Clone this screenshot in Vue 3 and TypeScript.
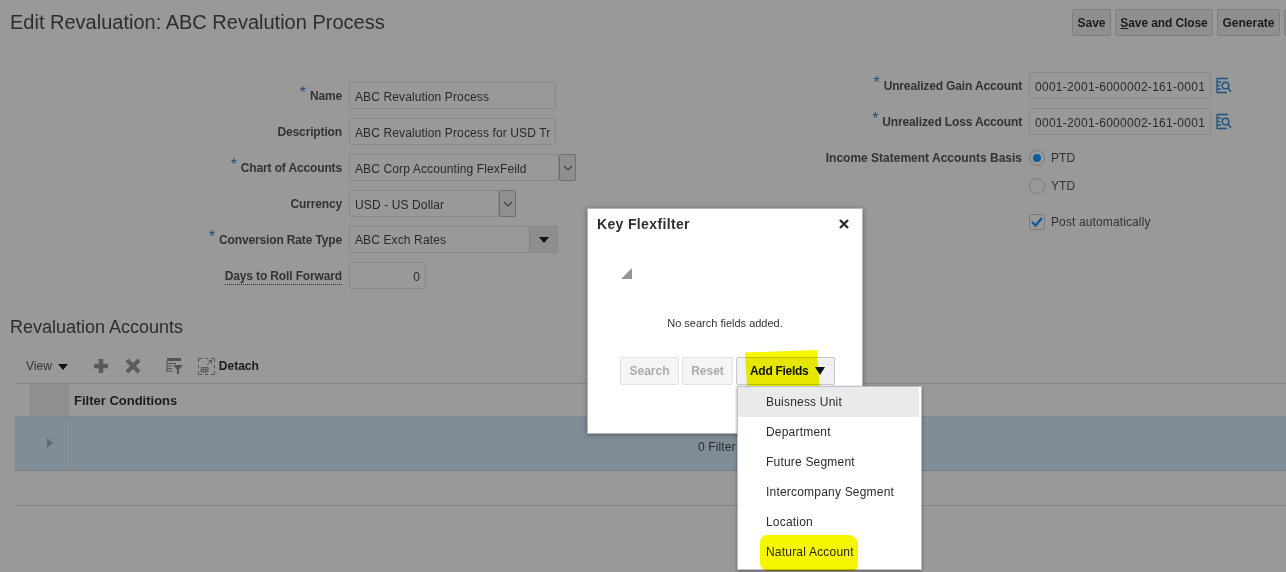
<script setup lang="ts">
interface Row { label: string; req?: boolean; hint?: boolean; value: string; kind: string }
const leftRows: Row[] = [
  { label: 'Name', req: true, value: 'ABC Revalution Process', kind: 'text' },
  { label: 'Description', value: 'ABC Revalution Process for USD Tr', kind: 'text' },
  { label: 'Chart of Accounts', req: true, value: 'ABC Corp Accounting FlexFeild', kind: 'chart' },
  { label: 'Currency', value: 'USD - US Dollar', kind: 'currency' },
  { label: 'Conversion Rate Type', req: true, value: 'ABC Exch Rates', kind: 'rate' },
  { label: 'Days to Roll Forward', hint: true, value: '0', kind: 'num' }
]
const accounts = ['Unrealized Gain Account', 'Unrealized Loss Account']
const items = ['Buisness Unit', 'Department', 'Future Segment', 'Intercompany Segment', 'Location', 'Natural Account']
</script>

<template>
  <div class="page">
    <header class="top">
      <h1>Edit Revaluation: ABC Revalution Process</h1>
      <div class="actions">
        <button class="btn save">Save</button>
        <button class="btn sc"><u>S</u>ave and Close</button>
        <button class="btn gen">Generate</button>
        <button class="btn more"></button>
      </div>
    </header>

    <section class="form">
      <div class="col-left">
        <div v-for="r in leftRows" :key="r.label" class="row">
          <label class="lab">
            <span v-if="r.req" class="star">*</span>
            <span :class="{ hint: r.hint }">{{ r.label }}</span>
          </label>
          <div v-if="r.kind === 'text'" class="field w207">{{ r.value }}</div>
          <div v-else-if="r.kind === 'num'" class="field num">{{ r.value }}</div>
          <div v-else-if="r.kind === 'rate'" class="field rate">
            <span class="grow">{{ r.value }}</span>
            <span class="ratebtn"><i class="tri"></i></span>
          </div>
          <div v-else class="sel" :class="r.kind">
            <div class="field grow">{{ r.value }}</div>
            <span class="chev">
              <svg width="10" height="6" viewBox="0 0 10 6"><path d="M1 1l4 4 4-4" fill="none" stroke="#3d3d3d" stroke-width="1.1" /></svg>
            </span>
          </div>
        </div>
      </div>

      <div class="col-right">
        <div v-for="a in accounts" :key="a" class="row">
          <label class="lab rl"><span class="star">*</span>{{ a }}</label>
          <div class="field acct">0001-2001-6000002-161-0001</div>
          <svg class="lookup" width="16" height="17" viewBox="0 0 16 17" fill="none" stroke="#1f5580" stroke-width="1.3">
            <path d="M1 1.500h11M1 5h4M1 8.500h3M1 12h4M1 15.500h10M1 1v15" />
            <circle cx="9.500" cy="8.500" r="3.300" stroke-width="1.500" />
            <path d="M12 11.200l3 3.600" stroke-width="1.700" />
          </svg>
        </div>
        <div class="row r-radio">
          <label class="lab rl inc">Income Statement Accounts Basis</label>
          <span class="radio on"><i></i></span>
          <span class="opt">PTD</span>
        </div>
        <div class="row r-radio2">
          <span class="lab rl"></span>
          <span class="radio"></span>
          <span class="opt">YTD</span>
        </div>
        <div class="row r-check">
          <span class="lab rl"></span>
          <span class="check">
            <svg width="14" height="12" viewBox="0 0 14 12"><path d="M2 6l3.500 3.500L12 2" fill="none" stroke="#0f5a99" stroke-width="2.400" /></svg>
          </span>
          <span class="opt">Post automatically</span>
        </div>
      </div>
    </section>

    <h2>Revaluation Accounts</h2>

    <div class="toolbar">
      <span class="view">View</span><i class="tri view-tri"></i>
      <svg class="t-plus" width="16" height="16" viewBox="0 0 16 16"><path d="M8 1v14M1 8h14" stroke="#5b5b5b" stroke-width="4.400" /></svg>
      <svg class="t-x" width="16" height="16" viewBox="0 0 16 16"><path d="M2 2l12 12M14 2L2 14" stroke="#5b5b5b" stroke-width="4" /></svg>
      <svg class="t-filter" width="18" height="17" viewBox="0 0 18 17" fill="none">
        <path d="M1 0h14v3H1z" fill="#555" />
        <path d="M1 5.500h9M1 8h5M1 10.500h5M1 13h6M1 3v11" stroke="#555" stroke-width="1.100" />
        <path d="M7 7h10l-4 4.500V16h-2v-4.500z" fill="#555" />
      </svg>
      <svg class="t-detach" width="17" height="17" viewBox="0 0 17 17" fill="none" stroke="#555">
        <path d="M.5 4V.5H4M7 .5h3M13 .5h3.500V4M16.500 7v3M16.500 13v3.500H13M10 16.500H7M4 16.500H.5V13M.5 10V7" />
        <path d="M3 9.500h7v4.500H3zM3 11.800h7M5.300 9.500v4.500M7.700 9.500v4.500" stroke-width=".9" />
        <path d="M9 7l4.500-4.500M10.500 2.500h3v3" stroke-width="1" />
      </svg>
      <span class="detach">Detach</span>
    </div>

    <div class="table">
      <div class="thead">
        <span class="c1"></span><span class="c2"></span>
        <span class="th">Filter Conditions</span>
      </div>
      <div class="tbody">
        <span class="c1"></span>
        <span class="c2"><i class="expand"></i></span>
        <span class="td">0 Filter</span>
      </div>
      <div class="tfoot"></div>
    </div>

    <div class="modal">
      <div class="m-head">
        <span class="m-title">Key Flexfilter</span>
        <svg width="12" height="12" viewBox="0 0 12 12"><path d="M2 2l8 8M10 2l-8 8" stroke="#2b2b2b" stroke-width="2.300" /></svg>
      </div>
      <div class="m-tri"></div>
      <p class="m-empty">No search fields added.</p>
      <div class="m-btns">
        <button class="mbtn off s">Search</button>
        <button class="mbtn off r">Reset</button>
        <button class="mbtn add">Add Fields<i class="tri add-tri"></i></button>
      </div>
      <span class="blob b1"></span>
      <ul class="menu">
        <li v-for="(it, i) in items" :key="it" :class="{ first: i === 0 }">{{ it }}</li>
        <span class="blob b2"></span>
      </ul>
    </div>
  </div>
</template>

<style>
html, body { margin: 0; background: #999; overflow: hidden; }
</style>

<style scoped>
.page {
  position: relative;
  width: 1286px;
  height: 572px;
  overflow: hidden;
  background: #999;
  font-family: "Liberation Sans", Arial, sans-serif;
  font-size: 12px;
  letter-spacing: .12px;
  color: #2e2e2e;
}
.top {
  display: flex;
  justify-content: space-between;
  height: 72px;
  padding: 9px 0 0 10px;
  box-sizing: border-box;
}
h1 {
  margin: 2px 0 0;
  font-size: 20px;
  line-height: 22px;
  font-weight: 400;
  letter-spacing: 0;
  color: #2d2d2d;
}
.actions { display: flex; gap: 4px; width: 214px; flex: none; height: 27px; }
.btn {
  height: 27px;
  padding: 0;
  flex: none;
  border: 1px solid #7e7e7e;
  border-radius: 2px;
  background: #8f8f8f;
  font: 700 12px "Liberation Sans", Arial, sans-serif;
  color: #1c1c1c;
}
.save { width: 39px; }
.sc { width: 98px; letter-spacing: -.1px; }
.gen { width: 63px; }
.more { width: 10px; }

.form { display: grid; grid-template-columns: 580px 1fr; height: 244px; }
.col-left { padding-top: 10px; }
.row { display: flex; align-items: center; height: 27px; margin-bottom: 9px; }
.lab {
  flex: none;
  width: 342px;
  margin-right: 7px;
  text-align: right;
  font-weight: 700;
  letter-spacing: -.14px;
  color: #333;
}
.rl { width: 442px; }
.inc { letter-spacing: 0; }
.star {
  color: #1f4c73;
  font-size: 16px;
  font-weight: 400;
  line-height: 10px;
  margin-right: 4px;
  position: relative;
  top: -2px;
}
.hint { border-bottom: 1px dotted #2e2e2e; padding-bottom: 1px; }
.field {
  box-sizing: border-box;
  height: 27px;
  line-height: 27px;
  padding: 1px 5px 0;
  border: 1px solid #888;
  border-radius: 2px;
  background: #999;
  white-space: nowrap;
  overflow: hidden;
  color: #2a2a2a;
}
.w207 { width: 207px; }
.num { width: 77px; text-align: right; padding-right: 5px; }
.rate { width: 209px; display: flex; padding-right: 0; padding-top: 0; }
.rate .grow { line-height: 27px; }
.grow { flex: 1; min-width: 0; }
.ratebtn {
  width: 27px;
  display: flex;
  align-items: center;
  justify-content: center;
  background: #8e8e8e;
  border-left: 1px solid #808080;
}
.sel { display: flex; align-items: center; }
.chart { width: 227px; }
.currency { width: 167px; }
.chev {
  flex: none;
  box-sizing: border-box;
  width: 17px;
  height: 27px;
  display: flex;
  align-items: center;
  justify-content: center;
  background: #8f8f8f;
  border: 1px solid #6f6f6f;
  border-radius: 2px;
}
.tri {
  display: inline-block;
  width: 0;
  height: 0;
  border-left: 5px solid transparent;
  border-right: 5px solid transparent;
  border-top: 6px solid #111;
}
.acct { width: 182px; letter-spacing: .28px; }
.lookup { margin-left: 5px; }
.r-radio { height: 27px; margin-bottom: 1px; }
.r-radio2 { margin-bottom: 9px; }
.radio {
  flex: none;
  box-sizing: border-box;
  width: 16px;
  height: 16px;
  border: 1px solid #7c7c7c;
  border-radius: 50%;
  display: flex;
  align-items: center;
  justify-content: center;
  background: #999;
}
.radio i { width: 8px; height: 8px; border-radius: 50%; background: #0f5a99; }
.opt { margin-left: 6px; color: #333; }
.check {
  flex: none;
  box-sizing: border-box;
  width: 16px;
  height: 16px;
  border: 1px solid #7c7c7c;
  border-radius: 2px;
  display: flex;
  align-items: center;
  justify-content: center;
}

h2 {
  margin: 0 0 0 10px;
  font-size: 18px;
  line-height: 22px;
  font-weight: 400;
  letter-spacing: 0;
  color: #2d2d2d;
}
.toolbar {
  display: flex;
  align-items: center;
  height: 24px;
  margin: 16px 0 5px 26px;
}
.view { color: #333; letter-spacing: 0; }
.view-tri { margin-left: 6px; margin-top: 1px; }
.t-plus { margin-left: 25px; }
.t-x { margin-left: 16px; }
.t-filter { margin-left: 25px; }
.t-detach { margin-left: 14px; }
.detach { margin-left: 4px; font-weight: 700; letter-spacing: 0; color: #1c1c1c; }

.table { margin-left: 15px; border-top: 1px solid #858585; }
.thead { display: flex; height: 32px; }
.tbody {
  display: flex;
  height: 53px;
  background: #808d96;
  border-top: 1px solid #79868f;
  border-bottom: 1px solid #7b7f83;
}
.tfoot { height: 34px; border-bottom: 1px solid #858585; }
.c1 { width: 15px; flex: none; border-right: 1px solid #868c90; }
.c2 {
  width: 37px;
  flex: none;
  border-right: 1px solid #8a8f92;
  display: flex;
  align-items: center;
  justify-content: center;
}
.thead .c2 { background: #8f8f8f; }
.th { padding-left: 5px; font-weight: 700; font-size: 13px; letter-spacing: 0; line-height: 33px; color: #1c1c1c; }
.td { padding-left: 629px; line-height: 60px; color: #2c2c2c; white-space: nowrap; }
.expand {
  width: 0;
  height: 0;
  margin-top: -2px;
  border-top: 5px solid transparent;
  border-bottom: 5px solid transparent;
  border-left: 6px solid #5d6870;
}

.modal {
  position: absolute;
  left: 587px;
  top: 208px;
  width: 276px;
  height: 226px;
  box-sizing: border-box;
  padding: 0 27px 0 9px;
  background: #fff;
  border: 1px solid #b5b5b5;
  box-shadow: 0 1px 5px rgba(0, 0, 0, .35);
}
.m-head {
  display: flex;
  align-items: center;
  justify-content: space-between;
  height: 30px;
  margin-right: -15px;
}
.m-title { font-weight: 700; font-size: 14px; letter-spacing: .35px; color: #2f2f2f; }
.m-tri {
  width: 0;
  height: 0;
  margin: 29px 0 0 24px;
  border-left: 11px solid transparent;
  border-bottom: 11px solid #969696;
}
.m-empty {
  margin: 37px 0 0;
  text-align: center;
  font-size: 11px;
  padding-left: 18px;
  line-height: 14px;
  letter-spacing: 0;
  color: #333;
  white-space: nowrap;
}
.m-btns { display: flex; justify-content: flex-end; gap: 3px; margin-top: 27px; }
.mbtn {
  height: 28px;
  padding: 0;
  flex: none;
  border: 1px solid #dfe1e3;
  border-radius: 2px;
  background: #f4f5f6;
  font: 700 12px "Liberation Sans", Arial, sans-serif;
}
.off { color: #a9abad; }
.s { width: 59px; }
.r { width: 51px; }
.add {
  width: 99px;
  display: flex;
  align-items: center;
  padding-left: 13px;
  letter-spacing: -.3px;
  background: #eef0f2;
  border-color: #c6c9cc;
  color: #111;
}
.add-tri {
  margin-left: 7px;
  border-left-width: 5.500px;
  border-right-width: 5.500px;
  border-top-width: 8px;
}
.blob {
  position: absolute;
  background: #f6f600;
  mix-blend-mode: multiply;
  pointer-events: none;
}
.b1 {
  left: 157px;
  top: 141px;
  width: 75px;
  height: 42px;
  border-radius: 2px 3px 8px 5px;
  clip-path: polygon(0 6%, 96% 0, 100% 100%, 3% 96%);
}
.menu {
  position: absolute;
  left: 149px;
  top: 177px;
  width: 185px;
  height: 184px;
  box-sizing: border-box;
  margin: 0;
  padding: 0 2px 0 0;
  list-style: none;
  background: #fff;
  border: 1px solid #bfc1c3;
  box-shadow: 0 1px 3px rgba(0, 0, 0, .4);
}
.menu li {
  height: 30px;
  line-height: 30px;
  padding-left: 28px;
  letter-spacing: .2px;
  color: #2b2b2b;
  white-space: nowrap;
}
.first { background: #e9eaec; }
.b2 { left: 22px; top: 148px; width: 98px; height: 36px; border-radius: 7px 9px 6px 8px; }
</style>
